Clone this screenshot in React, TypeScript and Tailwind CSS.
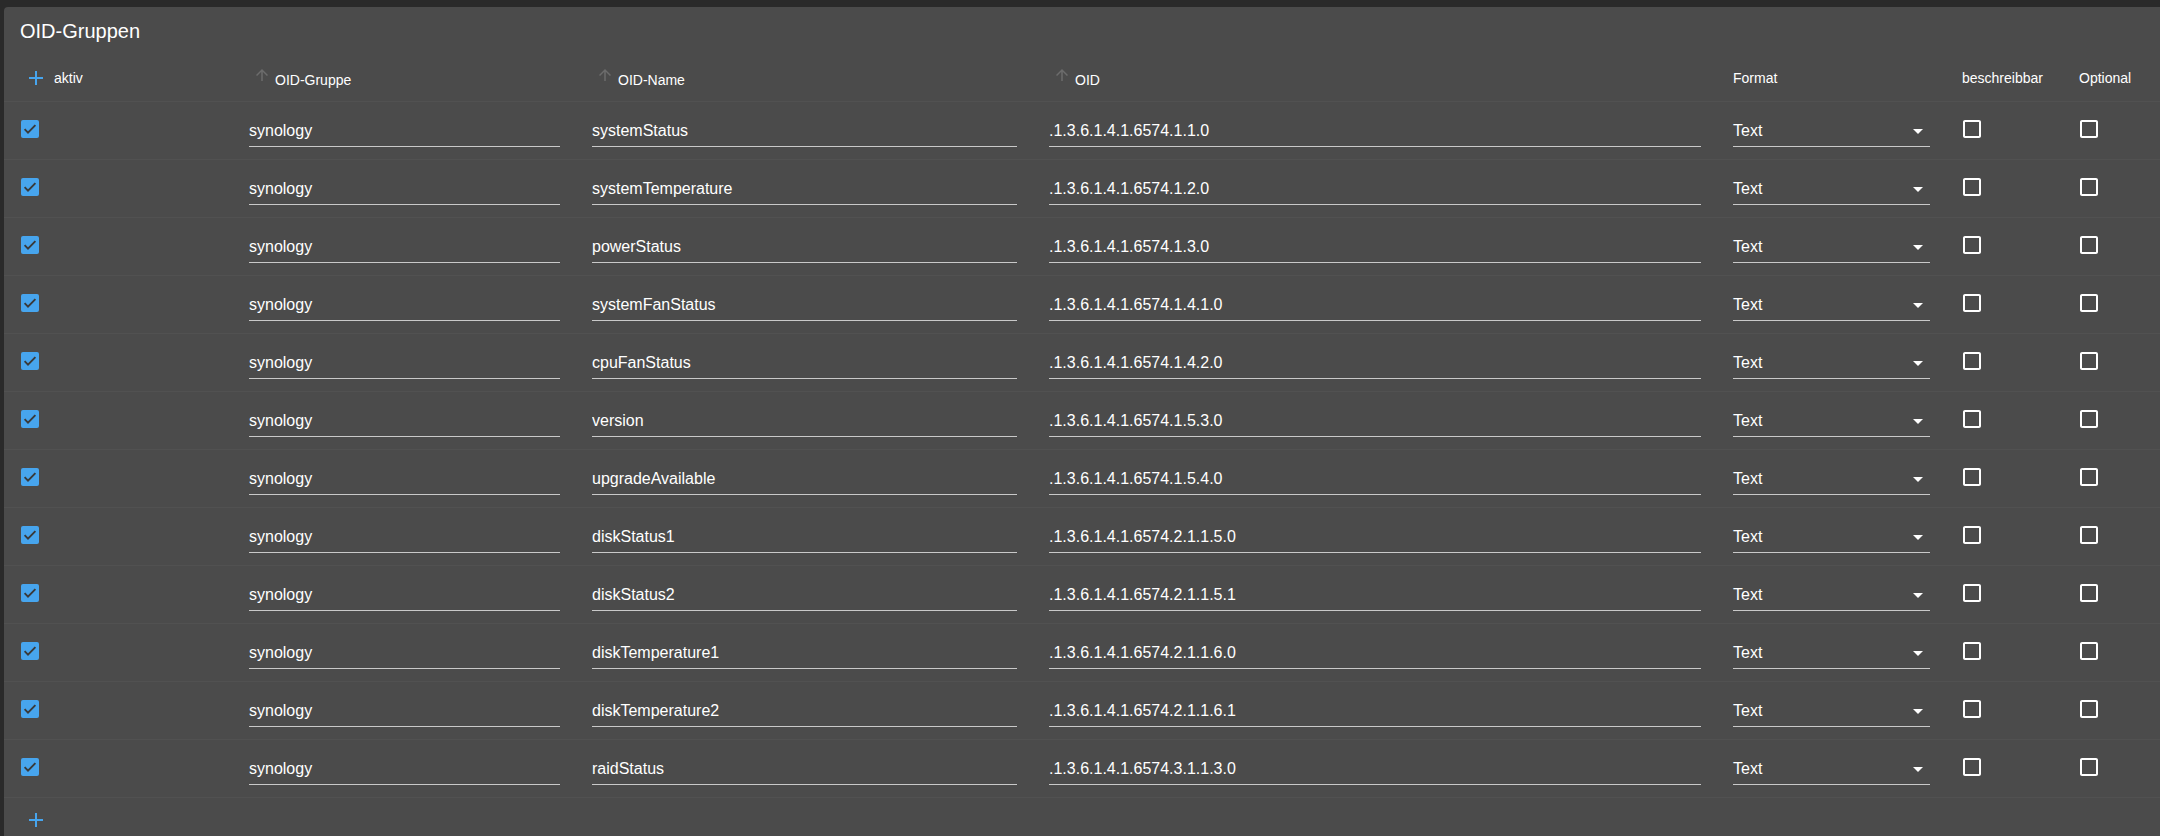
import React from "react";

const rows: [string, string][] = [
  ["systemStatus", ".1.3.6.1.4.1.6574.1.1.0"],
  ["systemTemperature", ".1.3.6.1.4.1.6574.1.2.0"],
  ["powerStatus", ".1.3.6.1.4.1.6574.1.3.0"],
  ["systemFanStatus", ".1.3.6.1.4.1.6574.1.4.1.0"],
  ["cpuFanStatus", ".1.3.6.1.4.1.6574.1.4.2.0"],
  ["version", ".1.3.6.1.4.1.6574.1.5.3.0"],
  ["upgradeAvailable", ".1.3.6.1.4.1.6574.1.5.4.0"],
  ["diskStatus1", ".1.3.6.1.4.1.6574.2.1.1.5.0"],
  ["diskStatus2", ".1.3.6.1.4.1.6574.2.1.1.5.1"],
  ["diskTemperature1", ".1.3.6.1.4.1.6574.2.1.1.6.0"],
  ["diskTemperature2", ".1.3.6.1.4.1.6574.2.1.1.6.1"],
  ["raidStatus", ".1.3.6.1.4.1.6574.3.1.1.3.0"],
];

const gridCols = "grid grid-cols-[229px_343px_457px_684px_229px_117px_1fr]";

function PlusIcon() {
  return (
    <svg width="24" height="24" viewBox="0 0 24 24" className="shrink-0">
      <path d="M19 13h-6v6h-2v-6H5v-2h6V5h2v6h6v2z" fill="#47a5ee" />
    </svg>
  );
}

function SortArrow() {
  return (
    <svg width="18" height="18" viewBox="0 0 24 24" className="shrink-0 ml-[4px] mr-[4px] mb-[6px]">
      <path d="M4 12l1.41 1.41L11 7.83V20h2V7.83l5.58 5.59L20 12l-8-8-8 8z" fill="#6c6c6c" />
    </svg>
  );
}

function Checked() {
  return (
    <svg width="24" height="24" viewBox="0 0 24 24" className="shrink-0 -ml-[2px]">
      <rect x="3" y="3" width="18" height="18" rx="2" fill="#47a5ee" />
      <path d="M6.6 12.2l3.4 3.4 7.4-7.4" fill="none" stroke="#3a3a3a" strokeWidth="1.9" />
    </svg>
  );
}

function Unchecked() {
  return (
    <svg width="24" height="24" viewBox="0 0 24 24" className="shrink-0 -ml-[2px]">
      <path
        d="M19 5v14H5V5h14m0-2H5c-1.1 0-2 .9-2 2v14c0 1.1.9 2 2 2h14c1.1 0 2-.9 2-2V5c0-1.1-.9-2-2-2z"
        fill="#ffffff"
      />
    </svg>
  );
}

function TextInput({ value }: { value: string }) {
  return (
    <div className="w-full h-[32px] border-b border-[#c9c9c9] pt-[6px] pb-[6px]">
      <input
        readOnly
        value={value}
        className="block w-full h-[19px] leading-[19px] text-[16px] text-white bg-transparent outline-none p-0"
      />
    </div>
  );
}

function SelectInput() {
  return (
    <div className="relative w-full h-[32px] border-b border-[#c9c9c9] pt-[6px] pb-[6px]">
      <div className="h-[19px] leading-[19px] text-[16px] text-white">Text</div>
      <svg width="24" height="24" viewBox="0 0 24 24" className="absolute right-0 top-[4px]">
        <path d="M7 10l5 5 5-5z" fill="#ffffff" />
      </svg>
    </div>
  );
}

export default function App() {
  return (
    <div
      className="w-[2160px] h-[836px] overflow-hidden bg-[#2a2a2a] pt-[7px] pl-[4px]"
      style={{ fontFamily: '"Liberation Sans", Arial, sans-serif' }}
    >
      <div className="h-full bg-[#4b4b4b] rounded-tl-[4px] text-white">
        <div className="pl-4 pt-[10px] h-[38px] text-[20px] leading-[28px]">OID-Gruppen</div>

        {/* header */}
        <div className={`${gridCols} h-[57px] border-b border-[#515151] text-[14px] leading-[20px]`}>
          <div className="flex items-end px-4 pb-[11px]">
            <span className="ml-[4px]"><PlusIcon /></span>
            <span className="ml-[6px] mb-[2px]">aktiv</span>
          </div>
          {["OID-Gruppe", "OID-Name", "OID"].map((h) => (
            <div key={h} className="flex items-end px-4 pb-[11px]">
              <SortArrow />
              <span>{h}</span>
            </div>
          ))}
          <div className="flex items-end px-4 pb-[13px]">Format</div>
          <div className="flex items-end px-4 pb-[13px]">beschreibbar</div>
          <div className="flex items-end px-4 pb-[13px]">Optional</div>
        </div>

        {/* rows */}
        {rows.map(([name, oid]) => (
          <div key={name} className={`${gridCols} h-[58px] border-b border-[#515151]`}>
            <div className="flex items-end px-4 pb-[18px]">
              <Checked />
            </div>
            <div className="flex items-end px-4 pb-[12px]">
              <TextInput value="synology" />
            </div>
            <div className="flex items-end px-4 pb-[12px]">
              <TextInput value={name} />
            </div>
            <div className="flex items-end px-4 pb-[12px]">
              <TextInput value={oid} />
            </div>
            <div className="flex items-end px-4 pb-[12px]">
              <SelectInput />
            </div>
            <div className="flex items-end px-4 pb-[18px]">
              <Unchecked />
            </div>
            <div className="flex items-end px-4 pb-[18px]">
              <Unchecked />
            </div>
          </div>
        ))}

        <div className="pl-[20px] pt-[10px]">
          <PlusIcon />
        </div>
      </div>
    </div>
  );
}
